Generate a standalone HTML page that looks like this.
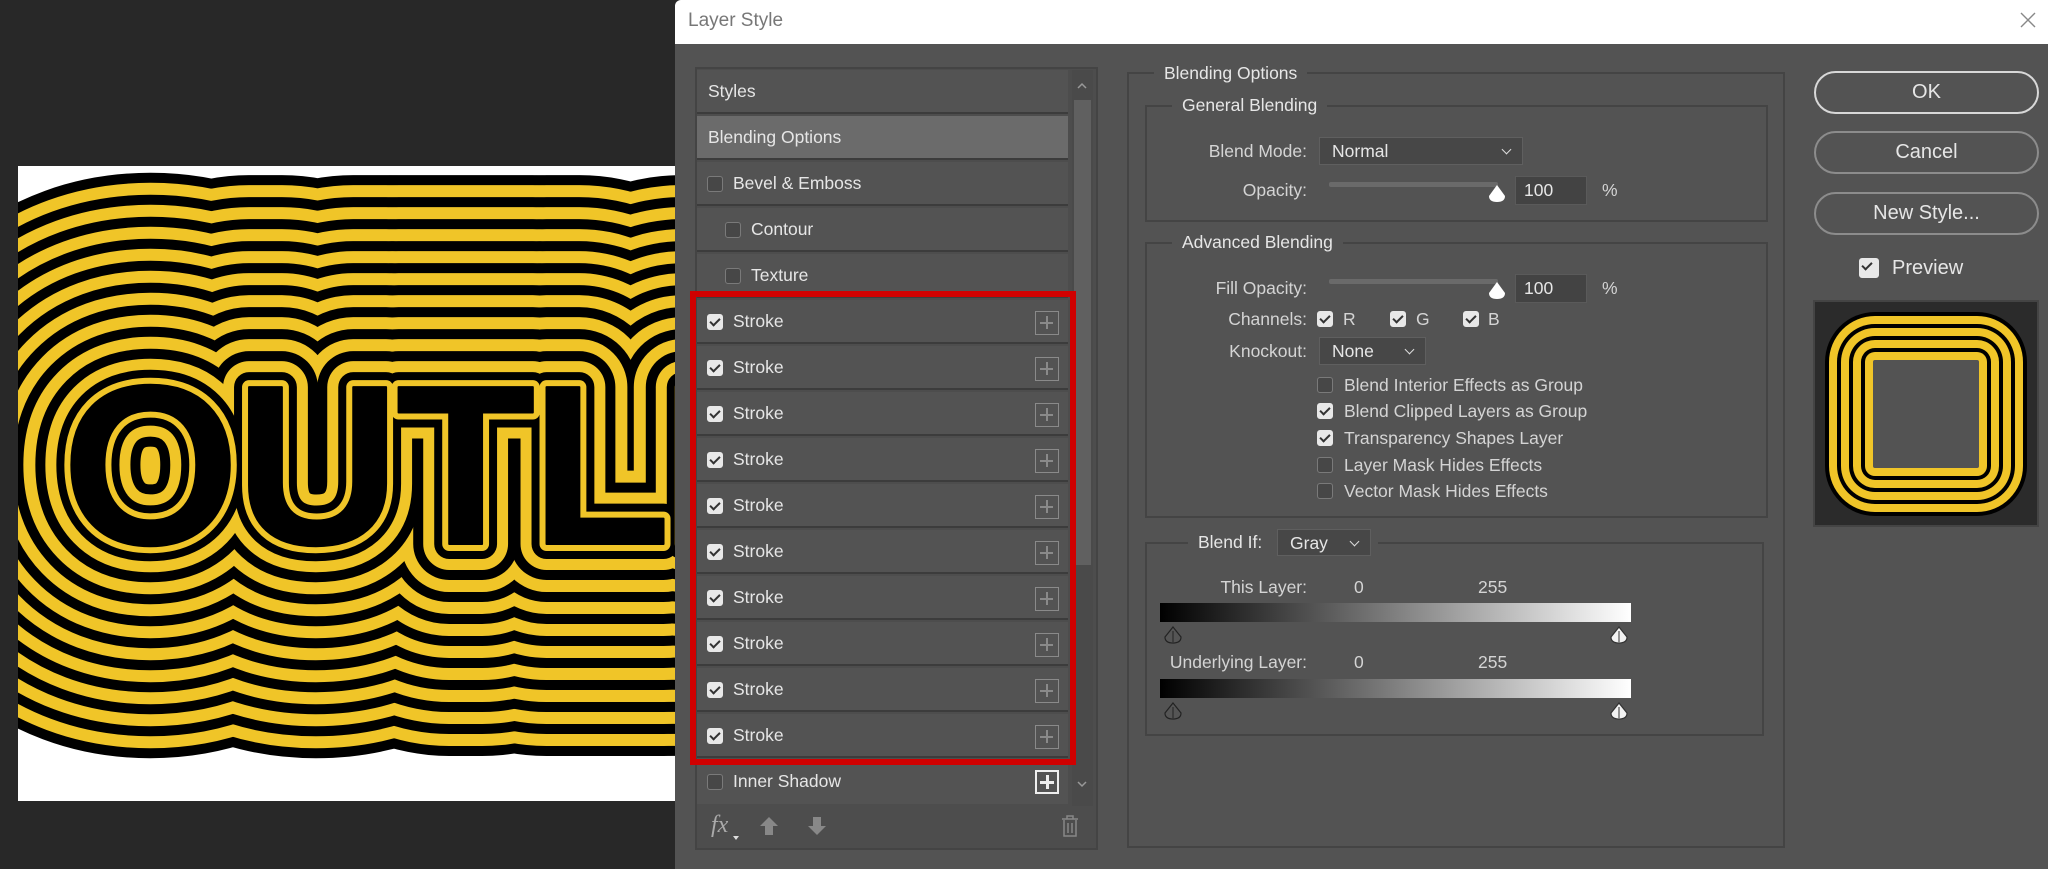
<!DOCTYPE html>
<html><head><meta charset="utf-8"><style>
*{margin:0;padding:0;box-sizing:border-box}
body{width:2048px;height:869px;overflow:hidden;background:#282828;font-family:"Liberation Sans",Arial,sans-serif;color:#e6e6e6;position:relative}
.a{position:absolute;white-space:nowrap}
.t{font-size:17.5px;line-height:20px}
.cb{position:absolute;width:16px;height:16px;border:1.5px solid #7a7a7a;border-radius:3px;background:#474747}
.cb.on{background:#e8e8e8;border-color:#e8e8e8}
.cb.on:after{content:"";position:absolute;left:4px;top:1px;width:4px;height:8px;border:solid #333;border-width:0 2.5px 2.5px 0;transform:rotate(45deg)}
.row{position:absolute;left:697px;width:371px;height:44px;background:#535353;border-bottom:2px solid #3c3c3c}
.plus{position:absolute;left:1035px;width:24px;height:24px;border:1.5px solid #8a8a8a}
.plus:before{content:"";position:absolute;left:4px;top:9.5px;width:13px;height:2px;background:#8a8a8a}
.plus:after{content:"";position:absolute;left:9.5px;top:4px;width:2px;height:13px;background:#8a8a8a}
.plusw{position:absolute;left:1035px;width:24px;height:24px;border:2px solid #eee}
.fs{position:absolute;border:2px solid #444}
.lg{position:absolute;background:#535353;padding:0 10px;font-size:17.5px;line-height:20px}
.dd{position:absolute;background:#474747;border:1px solid #5f5f5f;font-size:17.5px;line-height:26px;padding-left:12px}
.dd:after{content:"";position:absolute;right:12px;top:8px;width:6px;height:6px;border:solid #ddd;border-width:0 1.5px 1.5px 0;transform:rotate(45deg)}
.inp{position:absolute;background:#434343;border:1px solid #5a5a5a;font-size:17.5px;line-height:27px;padding-left:8px}
.btn{position:absolute;left:1814px;width:225px;height:43px;border:2px solid #8c8c8c;border-radius:22px;text-align:center;font-size:20px;line-height:39px}
.lbl{position:absolute;text-align:right;font-size:17.5px;line-height:20px;color:#d4d4d4}
.grad{position:absolute;left:1160px;width:471px;height:19px;background:linear-gradient(90deg,#000,#fff)}
</style></head><body>
<!-- canvas -->
<svg class="a" style="left:0;top:0" width="680" height="869">
<defs><clipPath id="c"><rect x="18" y="166" width="660" height="635"/></clipPath></defs>
<rect x="18" y="166" width="660" height="635" fill="#fff"/>
<g clip-path="url(#c)" font-family="Liberation Sans,Arial,sans-serif" font-weight="bold" font-size="228" stroke-linejoin="round">
<text x="62" y="544" fill="#000" stroke="#000" stroke-width="424" letter-spacing="-4">OUTLINE</text>
<text x="62" y="544" fill="#000" stroke="#f0c528" stroke-width="404" letter-spacing="-4">OUTLINE</text>
<text x="62" y="544" fill="#000" stroke="#000" stroke-width="380" letter-spacing="-4">OUTLINE</text>
<text x="62" y="544" fill="#000" stroke="#f0c528" stroke-width="360" letter-spacing="-4">OUTLINE</text>
<text x="62" y="544" fill="#000" stroke="#000" stroke-width="336" letter-spacing="-4">OUTLINE</text>
<text x="62" y="544" fill="#000" stroke="#f0c528" stroke-width="316" letter-spacing="-4">OUTLINE</text>
<text x="62" y="544" fill="#000" stroke="#000" stroke-width="292" letter-spacing="-4">OUTLINE</text>
<text x="62" y="544" fill="#000" stroke="#f0c528" stroke-width="272" letter-spacing="-4">OUTLINE</text>
<text x="62" y="544" fill="#000" stroke="#000" stroke-width="248" letter-spacing="-4">OUTLINE</text>
<text x="62" y="544" fill="#000" stroke="#f0c528" stroke-width="228" letter-spacing="-4">OUTLINE</text>
<text x="62" y="544" fill="#000" stroke="#000" stroke-width="204" letter-spacing="-4">OUTLINE</text>
<text x="62" y="544" fill="#000" stroke="#f0c528" stroke-width="184" letter-spacing="-4">OUTLINE</text>
<text x="62" y="544" fill="#000" stroke="#000" stroke-width="160" letter-spacing="-4">OUTLINE</text>
<text x="62" y="544" fill="#000" stroke="#f0c528" stroke-width="140" letter-spacing="-4">OUTLINE</text>
<text x="62" y="544" fill="#000" stroke="#000" stroke-width="116" letter-spacing="-4">OUTLINE</text>
<text x="62" y="544" fill="#000" stroke="#f0c528" stroke-width="96" letter-spacing="-4">OUTLINE</text>
<text x="62" y="544" fill="#000" stroke="#000" stroke-width="72" letter-spacing="-4">OUTLINE</text>
<text x="62" y="544" fill="#000" stroke="#f0c528" stroke-width="52" letter-spacing="-4">OUTLINE</text>
<text x="62" y="544" fill="#000" stroke="#000" stroke-width="30" letter-spacing="-4">OUTLINE</text>
<text x="62" y="544" fill="#000" stroke="#f0c528" stroke-width="14" letter-spacing="-4">OUTLINE</text>
<text x="62" y="544" fill="#000" stroke="#000" stroke-width="2" letter-spacing="-4">OUTLINE</text>
</g></svg>

<!-- dialog -->
<div class="a" style="left:675px;top:0;width:1373px;height:869px;background:#535353;border-top-left-radius:6px"></div>
<div class="a" style="left:675px;top:0;width:1373px;height:44px;background:#fff;border-top-left-radius:6px"></div>
<div class="a" style="left:688px;top:10px;font-size:19px;color:#777">Layer Style</div>
<svg class="a" style="left:2020px;top:12px" width="16" height="16"><path d="M1 1L15 15M15 1L1 15" stroke="#888" stroke-width="1.4"/></svg>

<!-- left list -->
<div class="a" style="left:695px;top:67px;width:403px;height:783px;border:2px solid #444;background:#4d4d4d"></div>
<div class="a" style="left:1072px;top:70px;width:21px;height:736px;background:#4a4a4a"></div>
<div class="a" style="left:1074px;top:100px;width:17px;height:465px;background:#606060"></div>
<svg class="a" style="left:1076px;top:82px" width="12" height="8"><path d="M2 6L6 2L10 6" stroke="#999" fill="none" stroke-width="1.5"/></svg>
<svg class="a" style="left:1076px;top:780px" width="12" height="8"><path d="M2 2L6 6L10 2" stroke="#999" fill="none" stroke-width="1.5"/></svg>

<div class="row" style="top:70px"></div><div class="a t" style="left:708px;top:81px">Styles</div>
<div class="row" style="top:116px;background:#6b6b6b"></div><div class="a t" style="left:708px;top:127px">Blending Options</div>
<div class="row" style="top:162px"></div><div class="cb" style="left:707px;top:176px"></div><div class="a t" style="left:733px;top:173px">Bevel &amp; Emboss</div>
<div class="row" style="top:208px"></div><div class="cb" style="left:725px;top:222px"></div><div class="a t" style="left:751px;top:219px">Contour</div>
<div class="row" style="top:254px"></div><div class="cb" style="left:725px;top:268px"></div><div class="a t" style="left:751px;top:265px">Texture</div>

<div class="row" style="top:300px"></div><div class="cb on" style="left:707px;top:314px"></div><div class="a t" style="left:733px;top:311px">Stroke</div><div class="plus" style="top:311px"></div>
<div class="row" style="top:346px"></div><div class="cb on" style="left:707px;top:360px"></div><div class="a t" style="left:733px;top:357px">Stroke</div><div class="plus" style="top:357px"></div>
<div class="row" style="top:392px"></div><div class="cb on" style="left:707px;top:406px"></div><div class="a t" style="left:733px;top:403px">Stroke</div><div class="plus" style="top:403px"></div>
<div class="row" style="top:438px"></div><div class="cb on" style="left:707px;top:452px"></div><div class="a t" style="left:733px;top:449px">Stroke</div><div class="plus" style="top:449px"></div>
<div class="row" style="top:484px"></div><div class="cb on" style="left:707px;top:498px"></div><div class="a t" style="left:733px;top:495px">Stroke</div><div class="plus" style="top:495px"></div>
<div class="row" style="top:530px"></div><div class="cb on" style="left:707px;top:544px"></div><div class="a t" style="left:733px;top:541px">Stroke</div><div class="plus" style="top:541px"></div>
<div class="row" style="top:576px"></div><div class="cb on" style="left:707px;top:590px"></div><div class="a t" style="left:733px;top:587px">Stroke</div><div class="plus" style="top:587px"></div>
<div class="row" style="top:622px"></div><div class="cb on" style="left:707px;top:636px"></div><div class="a t" style="left:733px;top:633px">Stroke</div><div class="plus" style="top:633px"></div>
<div class="row" style="top:668px"></div><div class="cb on" style="left:707px;top:682px"></div><div class="a t" style="left:733px;top:679px">Stroke</div><div class="plus" style="top:679px"></div>
<div class="row" style="top:714px"></div><div class="cb on" style="left:707px;top:728px"></div><div class="a t" style="left:733px;top:725px">Stroke</div><div class="plus" style="top:725px"></div>
<div class="row" style="top:760px;border-bottom:none"></div><div class="cb" style="left:707px;top:774px"></div><div class="a t" style="left:733px;top:771px">Inner Shadow</div>
<div class="plusw" style="top:770px"><span style="position:absolute;left:3px;top:8.5px;width:14px;height:3px;background:#eee"></span><span style="position:absolute;left:8.5px;top:3px;width:3px;height:14px;background:#eee"></span></div>
<div class="a" style="left:690px;top:291px;width:386px;height:474px;border:6px solid #d00000"></div>

<!-- toolbar -->
<div class="a" style="left:711px;top:812px;font-size:24px;font-style:italic;font-family:'Liberation Serif',serif;color:#aaa">fx</div>
<div class="a" style="left:733px;top:836px;width:0;height:0;border:3px solid transparent;border-top:4px solid #ddd"></div>
<svg class="a" style="left:758px;top:815px" width="22" height="22"><path d="M11 2L20 11H15V20H7V11H2Z" fill="#888"/></svg>
<svg class="a" style="left:806px;top:815px" width="22" height="22"><path d="M11 20L20 11H15V2H7V11H2Z" fill="#888"/></svg>
<svg class="a" style="left:1060px;top:814px" width="20" height="24"><path d="M2 5H18M7 5V2H13V5M4 6V22H16V6M8 9V19M12 9V19" stroke="#888" fill="none" stroke-width="1.5"/></svg>

<!-- right panel -->
<div class="fs" style="left:1127px;top:72px;width:658px;height:776px"></div>
<div class="lg" style="left:1154px;top:63px">Blending Options</div>
<div class="fs" style="left:1145px;top:105px;width:623px;height:117px"></div>
<div class="lg" style="left:1172px;top:95px">General Blending</div>
<div class="lbl" style="left:1180px;width:127px;top:141px">Blend Mode:</div>
<div class="dd" style="left:1319px;top:137px;width:204px;height:28px">Normal</div>
<div class="lbl" style="left:1180px;width:127px;top:180px">Opacity:</div>
<div class="a" style="left:1329px;top:182px;width:169px;height:5px;background:#6a6a6a;border-radius:2px"></div>
<svg class="a" style="left:1487px;top:184px" width="20" height="20"><path d="M10 1L18 12Q18 18 10 18Q2 18 2 12Z" fill="#fff"/></svg>
<div class="inp" style="left:1515px;top:176px;width:72px;height:29px">100</div>
<div class="a t" style="left:1602px;top:180px;color:#d4d4d4">%</div>

<div class="fs" style="left:1145px;top:242px;width:623px;height:276px"></div>
<div class="lg" style="left:1172px;top:232px">Advanced Blending</div>
<div class="lbl" style="left:1150px;width:157px;top:278px">Fill Opacity:</div>
<div class="a" style="left:1329px;top:279px;width:169px;height:5px;background:#6a6a6a;border-radius:2px"></div>
<svg class="a" style="left:1487px;top:281px" width="20" height="20"><path d="M10 1L18 12Q18 18 10 18Q2 18 2 12Z" fill="#fff"/></svg>
<div class="inp" style="left:1515px;top:274px;width:72px;height:29px">100</div>
<div class="a t" style="left:1602px;top:278px;color:#d4d4d4">%</div>
<div class="lbl" style="left:1180px;width:127px;top:309px">Channels:</div>
<div class="cb on" style="left:1317px;top:311px"></div><div class="a t" style="left:1343px;top:309px;color:#d4d4d4">R</div>
<div class="cb on" style="left:1390px;top:311px"></div><div class="a t" style="left:1416px;top:309px;color:#d4d4d4">G</div>
<div class="cb on" style="left:1463px;top:311px"></div><div class="a t" style="left:1488px;top:309px;color:#d4d4d4">B</div>
<div class="lbl" style="left:1180px;width:127px;top:341px">Knockout:</div>
<div class="dd" style="left:1319px;top:337px;width:107px;height:28px">None</div>
<div class="cb" style="left:1317px;top:377px"></div><div class="a t" style="left:1344px;top:375px;color:#d4d4d4">Blend Interior Effects as Group</div>
<div class="cb on" style="left:1317px;top:403px"></div><div class="a t" style="left:1344px;top:401px;color:#d4d4d4">Blend Clipped Layers as Group</div>
<div class="cb on" style="left:1317px;top:430px"></div><div class="a t" style="left:1344px;top:428px;color:#d4d4d4">Transparency Shapes Layer</div>
<div class="cb" style="left:1317px;top:457px"></div><div class="a t" style="left:1344px;top:455px;color:#d4d4d4">Layer Mask Hides Effects</div>
<div class="cb" style="left:1317px;top:483px"></div><div class="a t" style="left:1344px;top:481px;color:#d4d4d4">Vector Mask Hides Effects</div>

<div class="fs" style="left:1145px;top:542px;width:619px;height:194px"></div>
<div class="a" style="left:1188px;top:530px;width:190px;height:28px;background:#535353"></div>
<div class="a t" style="left:1198px;top:532px">Blend If:</div>
<div class="dd" style="left:1277px;top:529px;width:94px;height:27px">Gray</div>
<div class="lbl" style="left:1180px;width:127px;top:577px">This Layer:</div>
<div class="a t" style="left:1354px;top:577px;color:#d4d4d4">0</div>
<div class="a t" style="left:1478px;top:577px;color:#d4d4d4">255</div>
<div class="grad" style="top:603px"></div>
<svg class="a" style="left:1163px;top:626px" width="20" height="18"><path d="M10 1L18 11Q18 17 10 17Q2 17 2 11Z" fill="#555" stroke="#222" stroke-width="1.2"/><path d="M10 5V16" stroke="#222"/></svg>
<svg class="a" style="left:1609px;top:626px" width="20" height="18"><path d="M10 1L18 11Q18 17 10 17Q2 17 2 11Z" fill="#f2f2f2" stroke="#333" stroke-width="1.2"/><path d="M10 5V16" stroke="#333"/></svg>
<div class="lbl" style="left:1150px;width:157px;top:652px">Underlying Layer:</div>
<div class="a t" style="left:1354px;top:652px;color:#d4d4d4">0</div>
<div class="a t" style="left:1478px;top:652px;color:#d4d4d4">255</div>
<div class="grad" style="top:679px"></div>
<svg class="a" style="left:1163px;top:702px" width="20" height="18"><path d="M10 1L18 11Q18 17 10 17Q2 17 2 11Z" fill="#555" stroke="#222" stroke-width="1.2"/><path d="M10 5V16" stroke="#222"/></svg>
<svg class="a" style="left:1609px;top:702px" width="20" height="18"><path d="M10 1L18 11Q18 17 10 17Q2 17 2 11Z" fill="#f2f2f2" stroke="#333" stroke-width="1.2"/><path d="M10 5V16" stroke="#333"/></svg>

<!-- buttons -->
<div class="btn" style="top:71px;border-color:#d8d8d8">OK</div>
<div class="btn" style="top:131px">Cancel</div>
<div class="btn" style="top:192px">New Style...</div>
<div class="cb on" style="left:1859px;top:258px;width:20px;height:20px"></div>
<div class="a" style="left:1892px;top:256px;font-size:20px;line-height:24px">Preview</div>
<div class="a" style="left:1813px;top:300px;width:226px;height:227px;background:#2b2b2b;border:2px solid #444"></div>
<svg class="a" style="left:1813px;top:300px" width="226" height="227">
<rect x="12" y="12" width="202" height="204" rx="50" fill="#000"/>
<rect x="16" y="16" width="194" height="196" rx="46" fill="#f0c528"/>
<rect x="24" y="24" width="178" height="180" rx="38" fill="#000"/>
<rect x="28" y="28" width="170" height="172" rx="34" fill="#f0c528"/>
<rect x="36" y="36" width="154" height="156" rx="26" fill="#000"/>
<rect x="40" y="40" width="146" height="148" rx="22" fill="#f0c528"/>
<rect x="48" y="48" width="130" height="132" rx="14" fill="#000"/>
<rect x="52" y="52" width="122" height="124" rx="10" fill="#f0c528"/>
<rect x="60" y="60" width="106" height="108" rx="2" fill="#535353"/>
</svg>
</body></html>
